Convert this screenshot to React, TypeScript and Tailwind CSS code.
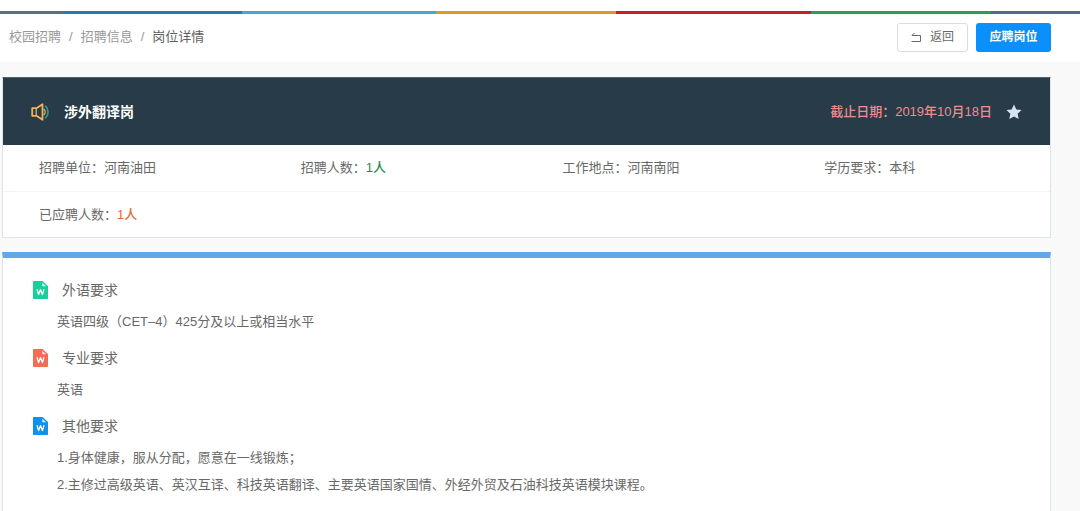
const stripes = [
  'bg-[#5b6b8c]',
  'bg-[#1c7fa6]',
  'bg-[#45a9cc]',
  'bg-[#e0972a]',
  'bg-[#cc1d24]',
  'bg-[#20a257]',
  'bg-[#52688c]'
];

const facts = [
  { label: '招聘单位', value: '河南油田' },
  { label: '招聘人数', value: '1人', color: 'text-[#1f8a57] font-medium' },
  { label: '工作地点', value: '河南南阳' },
  { label: '学历要求', value: '本科' }
];

const requirements = [
  {
    title: '外语要求',
    color: 'text-[#16cf9b]',
    lines: ['英语四级（CET–4）425分及以上或相当水平']
  },
  {
    title: '专业要求',
    color: 'text-[#f36c53]',
    lines: ['英语']
  },
  {
    title: '其他要求',
    color: 'text-[#1191ee]',
    lines: [
      '1.身体健康，服从分配，愿意在一线锻炼；',
      '2.主修过高级英语、英汉互译、科技英语翻译、主要英语国家国情、外经外贸及石油科技英语模块课程。'
    ]
  }
];

function FileIcon({ className }: { className: string }) {
  return (
    <svg width="15" height="18" viewBox="0 0 15 18" className={className} aria-hidden="true">
      <path d="M.8 0H9.5L15 5v12.2a.8.8 0 0 1-.8.8H.8a.8.8 0 0 1-.8-.8V.8A.8.8 0 0 1 .8 0z" fill="currentColor" />
      <path d="M9.3 1.8v2.6a.9.9 0 0 0 .9.9h3z" fill="#fff" fillOpacity=".85" />
      <path d="M4 8.2l1.6 5.4 1.9-5 1.9 5L11 8.2" fill="none" stroke="#fff" strokeWidth="1.3" strokeLinejoin="round" />
    </svg>
  );
}

function SpeakerIcon() {
  return (
    <svg width="18" height="18" viewBox="0 0 18 18" fill="none" aria-hidden="true">
      <path d="M1.2 5.2h4.3l6-4v15.6l-6-4H1.2z" stroke="#f2b25c" strokeWidth="1.8" strokeLinejoin="round" />
      <path d="M5.2 5.5v7" stroke="#f2b25c" strokeWidth="1.3" />
      <path d="M13 6.2a4 4 0 0 1 0 5.6" stroke="#c9b264" strokeWidth="1.4" strokeLinecap="round" />
      <path d="M14.6 3.2a8 8 0 0 1 0 11.6" stroke="#2f9f8d" strokeWidth="1.6" strokeLinecap="round" />
    </svg>
  );
}

function BackIcon() {
  return (
    <svg width="11" height="11" viewBox="0 0 11 11" fill="none" stroke="currentColor" aria-hidden="true">
      <path d="M1 3.5h8.5v6H.5" />
      <path d="M3.5 1L1 3.5" />
    </svg>
  );
}

function StarIcon() {
  return (
    <svg width="16" height="16" viewBox="0 0 24 24" fill="#d9e2f3" aria-hidden="true">
      <path d="M12 .8l3.4 7.3 7.9 1-5.8 5.5 1.5 7.9-7-3.9-7 3.9 1.5-7.9L.7 9.1l7.9-1z" />
    </svg>
  );
}

export default function App() {
  return (
    <div className="flex min-h-screen flex-col bg-[#f9f9fa] text-[13px] text-[#686868] font-['Liberation_Sans','Noto_Sans_CJK_SC',sans-serif]">
      <header className="bg-white pt-[11px]">
        <div className="grid grid-cols-[64fr_178fr_194fr_180fr_195fr_180fr_89fr]">
          {stripes.map((color, index) => (
            <div key={index} className={`h-[3px] ${color}`} />
          ))}
        </div>
        <div className="flex h-12 items-center justify-between pr-[29px] pb-[2px] pl-[9px]">
          <nav aria-label="breadcrumb" className="flex items-center gap-2 text-[#999]">
            <a href="#campus">校园招聘</a>
            <span>/</span>
            <a href="#jobs">招聘信息</a>
            <span>/</span>
            <span className="text-[#606060]">岗位详情</span>
          </nav>
          <div className="flex gap-2 text-xs">
            <button type="button" className="flex h-[29px] w-[71px] items-center justify-center gap-2 rounded-[3px] border border-[#dcdcdc] bg-white">
              <BackIcon />
              返回
            </button>
            <button type="button" className="h-[29px] w-[75px] rounded-[3px] bg-[#0b90fb] font-bold text-white">
              应聘岗位
            </button>
          </div>
        </div>
      </header>

      <main className="flex flex-1 flex-col gap-[14px] pt-[15px] pr-[29px] pl-[2px]">
        <section className="border border-[#dbe5ea] border-t-[#4f6270] bg-white">
          <div className="flex h-[67px] items-center justify-between bg-[#283b49] px-7">
            <div className="flex items-center gap-[15px]">
              <SpeakerIcon />
              <h1 className="text-sm font-bold text-white">涉外翻译岗</h1>
            </div>
            <div className="flex items-center gap-[14px]">
              <p className="font-medium text-[#f08c8c]">截止日期：2019年10月18日</p>
              <button type="button" aria-label="收藏">
                <StarIcon />
              </button>
            </div>
          </div>
          <dl className="grid grid-cols-4 border-b border-[#f2f4f5]">
            {facts.map((fact) => (
              <div key={fact.label} className="flex h-[46px] items-center pl-9">
                <dt>{fact.label}：</dt>
                <dd className={fact.color}>{fact.value}</dd>
              </div>
            ))}
          </dl>
          <dl className="flex h-[45px] items-center pl-9">
            <dt>已应聘人数：</dt>
            <dd className="font-medium text-[#e8672f]">1人</dd>
          </dl>
        </section>

        <section className="flex-1 border-x border-t-6 border-x-[#dbe5ea] border-t-[#62a8e6] bg-white pt-[18px]">
          {requirements.map((item) => (
            <div key={item.title} className="mb-[9px]">
              <h2 className="mb-1 flex h-7 items-center gap-[14px] pl-[30px] text-sm">
                <FileIcon className={item.color} />
                {item.title}
              </h2>
              {item.lines.map((line) => (
                <p key={line} className="pr-6 pl-[54px] leading-[27px]">{line}</p>
              ))}
            </div>
          ))}
        </section>
      </main>
    </div>
  );
}
